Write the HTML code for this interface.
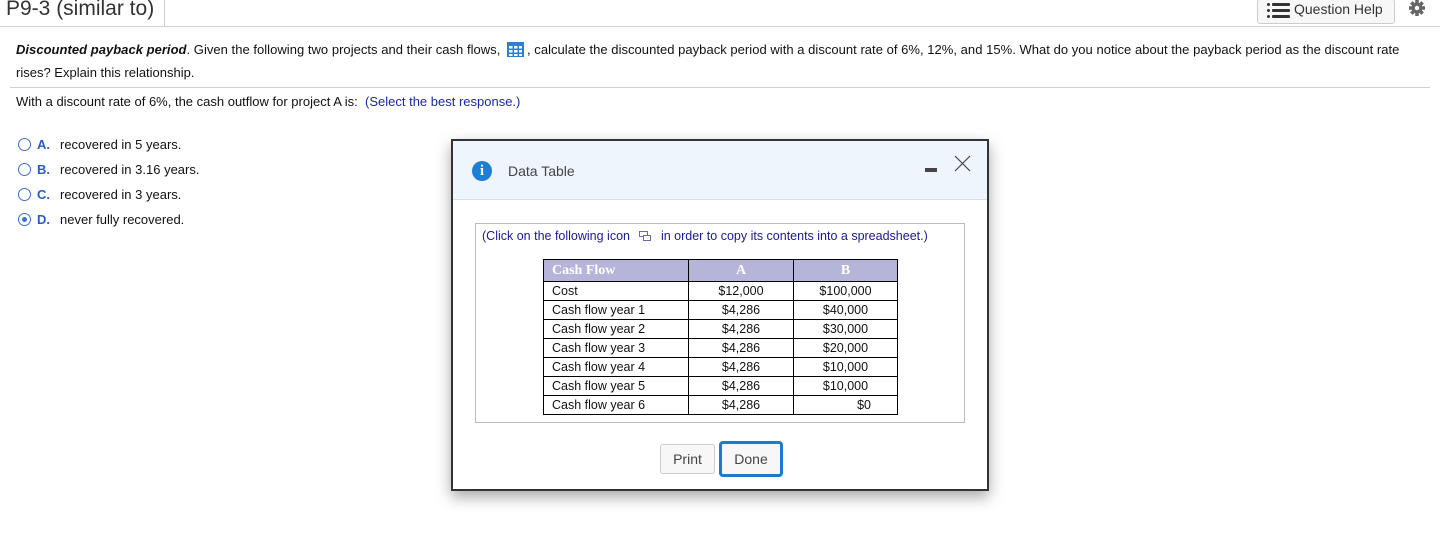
<!DOCTYPE html>
<html><head><style>
body{margin:0;width:1440px;height:548px;position:relative;background:#fff;font-family:"Liberation Sans",Arial,sans-serif;color:#111;overflow:hidden}
.a{position:absolute;white-space:nowrap}
.t{font-size:13px}
.opt{position:absolute;left:17px;font-size:13px;height:16px;line-height:16px;white-space:nowrap;width:300px}
.opt .r{position:absolute;left:1px;top:1px;width:13px;height:13px;border:1.5px solid #3b6fd0;border-radius:50%;box-sizing:border-box}
.opt .l{position:absolute;left:20px;color:#2a5cc9;font-weight:bold}
.opt .x{position:absolute;left:43px}
table{border-collapse:collapse;font-size:12.5px}
td{border:1px solid #000;height:18px;padding:0 8px;line-height:18px}
th{border:1px solid #000;height:21px;line-height:21px;padding:0;background:#b5b5da;color:#fff;font-family:"Liberation Serif",serif;font-size:14px}
</style></head><body>
<div class="a" style="left:6px;top:-3px;font-size:21px;color:#333">P9-3 (similar to)</div>
<div class="a" style="left:164px;top:0;width:1px;height:26px;background:#ccc"></div>
<div class="a" style="left:0;top:26px;width:1440px;height:1px;background:#d0d0d0"></div>
<div class="a" style="left:1257px;top:-1px;width:138px;height:25px;border:1px solid #ccc;border-radius:3px;background:#f7f7f7;box-sizing:border-box"></div>
<svg class="a" style="left:1267px;top:3px" width="24" height="15"><g fill="#333"><circle cx="1.5" cy="1.5" r="1.5"/><circle cx="1.5" cy="7.5" r="1.5"/><circle cx="1.5" cy="13.5" r="1.5"/><rect x="5" y="0" width="18" height="3" rx="1"/><rect x="5" y="6" width="18" height="3" rx="1"/><rect x="5" y="12" width="18" height="3" rx="1"/></g></svg>
<div class="a" style="left:1294px;top:1px;font-size:14px;color:#333">Question Help</div>
<svg class="a" style="left:1408px;top:0" width="18" height="16" viewBox="0 0 18 18"><g fill="#666"><circle cx="9" cy="9" r="6"/><rect x="7" y="0" width="4" height="18"/><rect x="0" y="7" width="18" height="4"/><rect x="7" y="0" width="4" height="18" transform="rotate(45 9 9)"/><rect x="7" y="0" width="4" height="18" transform="rotate(-45 9 9)"/></g><circle cx="9" cy="9" r="2.5" fill="#fff"/></svg>
<div class="a t" style="left:16px;top:42px;letter-spacing:0.03px"><b><i>Discounted payback period</i></b>. Given the following two projects and their cash flows, <span style="display:inline-block;width:17px;height:15px;vertical-align:-3px;background:#2a7fd8;position:relative;margin:0 3px"><svg width="17" height="15" style="position:absolute;left:0;top:0"><g fill="#fff"><rect x="2" y="4" width="3.5" height="2.5"/><rect x="7" y="4" width="3.5" height="2.5"/><rect x="12" y="4" width="3" height="2.5"/><rect x="2" y="8" width="3.5" height="2.5"/><rect x="7" y="8" width="3.5" height="2.5"/><rect x="12" y="8" width="3" height="2.5"/><rect x="2" y="12" width="3.5" height="2"/><rect x="7" y="12" width="3.5" height="2"/><rect x="12" y="12" width="3" height="2"/></g></svg></span>, calculate the discounted payback period with a discount rate of 6%, 12%, and 15%. What do you notice about the payback period as the discount rate</div>
<div class="a t" style="left:16px;top:65px">rises? Explain this relationship.</div>
<div class="a" style="left:10px;top:87px;width:1420px;height:1px;background:#d0d0d0"></div>
<div class="a t" style="left:16px;top:94px">With a discount rate of 6%, the cash outflow for project A is:&nbsp; <span style="color:#1a2aa0">(Select the best response.)</span></div>
<div class="opt" style="top:137px"><span class="r"></span><span class="l">A.</span><span class="x">recovered in 5 years.</span></div>
<div class="opt" style="top:162px"><span class="r"></span><span class="l">B.</span><span class="x">recovered in 3.16 years.</span></div>
<div class="opt" style="top:187px"><span class="r"></span><span class="l">C.</span><span class="x">recovered in 3 years.</span></div>
<div class="opt" style="top:212px"><span class="r"><span style="position:absolute;left:2.5px;top:2.5px;width:5px;height:5px;border-radius:50%;background:#3b6fd0"></span></span><span class="l">D.</span><span class="x">never fully recovered.</span></div>

<div class="a" style="left:451px;top:139px;width:538px;height:352px;border:2px solid #333;box-sizing:border-box;background:#fff;box-shadow:0 6px 14px rgba(0,0,0,.35)">
 <div style="position:absolute;left:0;top:0;width:534px;height:58px;background:#eff5fd;border-bottom:1px solid #cfe0ef"></div>
 <div style="position:absolute;left:19px;top:20px;width:20px;height:20px;border-radius:50%;background:#1b7fd6;color:#fff;font-weight:bold;font-family:'Liberation Serif',serif;font-size:15px;text-align:center;line-height:20px">i</div>
 <div style="position:absolute;left:55px;top:22px;font-size:14px;color:#444">Data Table</div>
 <div style="position:absolute;left:472px;top:27px;width:12px;height:4px;background:#444"></div>
 <svg style="position:absolute;left:501px;top:14px" width="18" height="18"><path d="M1 1L16 16M16 1L1 16" stroke="#444" stroke-width="1.2"/></svg>
 <div style="position:absolute;left:22px;top:82px;width:490px;height:200px;border:1px solid #bbb;box-sizing:border-box">
  <div style="position:absolute;left:6px;top:5px;font-size:12.5px;color:#1a1a90;white-space:nowrap">(Click on the following icon <svg width="12" height="10" style="vertical-align:-1px;margin:0 6px"><rect x="0.5" y="0.5" width="8" height="5" fill="none" stroke="#6a6ab0"/><rect x="4.5" y="4.5" width="7" height="5" fill="#fff" stroke="#6a6ab0"/></svg> in order to copy its contents into a spreadsheet.)</div>
  <table style="position:absolute;left:67px;top:35px;width:355px">
   <tr><th style="width:136px;text-align:left;padding-left:8px">Cash Flow</th><th style="width:104px">A</th><th>B</th></tr>
   <tr><td>Cost</td><td style="text-align:center">$12,000</td><td style="text-align:center">$100,000</td></tr>
   <tr><td>Cash flow year 1</td><td style="text-align:center">$4,286</td><td style="text-align:center">$40,000</td></tr>
   <tr><td>Cash flow year 2</td><td style="text-align:center">$4,286</td><td style="text-align:center">$30,000</td></tr>
   <tr><td>Cash flow year 3</td><td style="text-align:center">$4,286</td><td style="text-align:center">$20,000</td></tr>
   <tr><td>Cash flow year 4</td><td style="text-align:center">$4,286</td><td style="text-align:center">$10,000</td></tr>
   <tr><td>Cash flow year 5</td><td style="text-align:center">$4,286</td><td style="text-align:center">$10,000</td></tr>
   <tr><td>Cash flow year 6</td><td style="text-align:center">$4,286</td><td style="text-align:right;padding-right:26px">$0</td></tr>
  </table>
 </div>
 <div style="position:absolute;left:207px;top:303px;width:55px;height:30px;border:1px solid #ccc;border-radius:3px;background:#f7f7f7;box-sizing:border-box;font-size:14px;color:#444;text-align:center;line-height:28px">Print</div>
 <div style="position:absolute;left:266px;top:300px;width:64px;height:36px;border:3px solid #1a7ad4;border-radius:4px;background:#f7f7f7;box-sizing:border-box;font-size:14px;color:#444;text-align:center;line-height:30px">Done</div>
</div>
</body></html>
